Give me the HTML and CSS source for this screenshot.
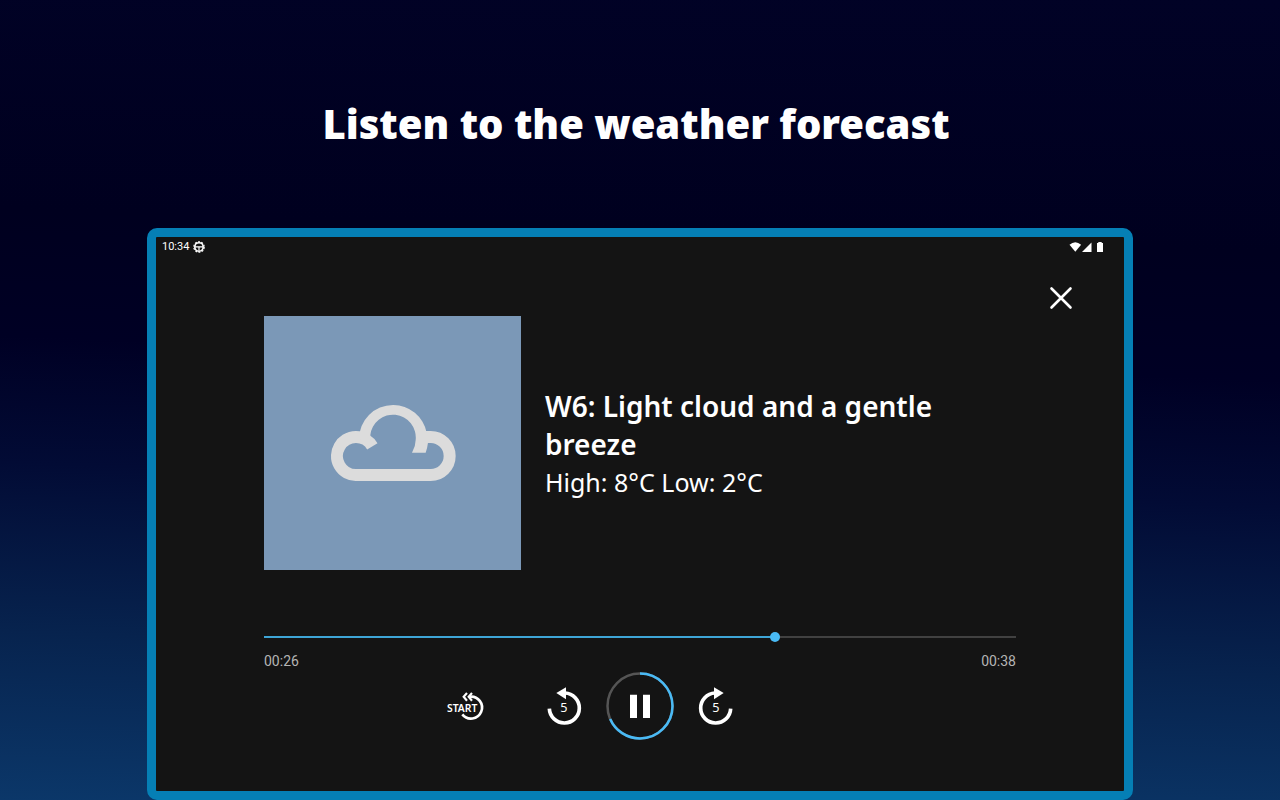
FILE: index.html
```html
<!DOCTYPE html>
<html lang="en">
  <head>
    <meta charset="utf-8">
    <meta name="viewport" content="width=device-width, initial-scale=1">
    <title>Listen to the weather forecast</title>
    <link rel="stylesheet" href="styles.css">
  </head>
  <body>
    <header class="intro">
      <h1>Listen to the weather forecast</h1>
    </header>
    <main class="device">
      <div class="status-bar">
        <div class="status-group">
          <span>10:34</span>
          <svg class="status-gear" viewBox="0 0 12 12" aria-hidden="true">
            <circle cx="6" cy="6" r="5.2" fill="none" stroke="#fff" stroke-width="1.2" stroke-dasharray="2 1.27"/>
            <circle cx="6" cy="6" r="4.2" fill="none" stroke="#fff" stroke-width="1.6"/>
            <path d="M2 5.8h8M6 5.8v4" stroke="#fff" stroke-width="1.2"/>
          </svg>
        </div>
        <svg class="status-signal" viewBox="0 0 36 12" aria-hidden="true">
          <path d="M.5 3.8Q6.3-1.3 12.1 3.8L6.3 10.7Z" fill="#fff"/>
          <path d="M13 11L22.500 1.500V11Z" fill="#fff"/>
          <path d="M28 2h1.300V1h3.400v1h1.300v9h-6Z" fill="#fff"/>
        </svg>
      </div>

      <button class="close" aria-label="Close">
        <svg viewBox="0 0 24 24"><path d="M2.500 2.500L21.500 21.500M21.500 2.500L2.500 21.500" stroke="#fff" stroke-width="2.600" stroke-linecap="round"/></svg>
      </button>

      <div class="player">
        <section class="forecast">
          <div class="artwork">
            <svg viewBox="60 44 378 229" aria-hidden="true">
              <path d="M187 168A57 57 0 1 0 137 254H362A57 57 0 0 0 362 140H345" fill="none" stroke="#dcdcdc" stroke-width="36"/>
              <path d="M147 146A102 102 0 0 1 249 44A102 102 0 0 1 350 127L354 157Q352 173 347 187H306Q317 168 317 149A68 68 0 0 0 181 134V150Z" fill="#dcdcdc"/>
            </svg>
          </div>
          <div class="details">
            <h2>W6: Light cloud and a gentle breeze</h2>
            <p>High: 8°C Low: 2°C</p>
          </div>
        </section>

        <input class="seek" type="range" min="0" max="38" step="0.1" value="25.9" aria-label="Playback position">
        <div class="times">
          <span>00:26</span>
          <span>00:38</span>
        </div>

        <div class="controls">
          <div class="controls-left">
            <button class="start" aria-label="Back to start">
              <svg viewBox="48 79 120 120">
                <path d="M119 111A33 33 0 1 1 97 164" fill="none" stroke="#fff" stroke-width="8"/>
                <path d="M111 100L101 111.500L111 123M126 100L116 111.500L126 123" fill="none" stroke="#fff" stroke-width="6.500"/>
                <text x="51" y="156">START</text>
              </svg>
            </button>
            <button class="skip" aria-label="Back 5 seconds">
              <svg viewBox="349 79 108 120">
                <path d="M359 147A45 45 0 1 0 406 100" fill="none" stroke="#fff" stroke-width="11"/>
                <path d="M380 100L409 83V119Z" fill="#fff"/>
                <text x="403" y="158">5</text>
              </svg>
            </button>
          </div>
          <button class="pause" aria-label="Pause">
            <svg viewBox="0 0 68 68">
              <circle cx="34" cy="34" r="32.500" fill="none" stroke="#555" stroke-width="2.500"/>
              <circle cx="34" cy="34" r="32.500" fill="none" stroke="#49baf5" stroke-width="2.500" pathLength="100" stroke-dasharray="68.500 100" transform="rotate(-90 34 34)"/>
              <path d="M24 22.700h7v23.300h-7zM37 22.700h7v23.300h-7z" fill="#fff"/>
            </svg>
          </button>
          <div>
            <button class="skip" aria-label="Forward 5 seconds">
              <svg viewBox="349 79 108 120">
                <path d="M447 147A45 45 0 1 1 400 100" fill="none" stroke="#fff" stroke-width="11"/>
                <path d="M426 100L397 83V119Z" fill="#fff"/>
                <text x="403" y="158">5</text>
              </svg>
            </button>
          </div>
        </div>
      </div>
    </main>
  </body>
</html>
```
FILE: styles.css
```css
* {
  box-sizing: border-box;
}

body {
  margin: 0;
  min-height: 100vh;
  display: flex;
  flex-direction: column;
  color: #fff;
  font-family: "Noto Sans", "Open Sans", sans-serif;
  background: linear-gradient(182deg, #010226 0%, #00001f 30%, #000024 45%, #020b35 60%, #07234e 80%, #0b3769 100%);
}

h1, h2, p {
  margin: 0;
}

button {
  display: block;
  padding: 0;
  border: none;
  background: none;
  color: inherit;
  cursor: pointer;
}

svg {
  display: block;
}

.intro {
  padding: 92px 8px 72px 0;
  text-align: center;
}

.intro h1 {
  font-size: 40px;
  line-height: 64px;
  font-weight: 900;
}

.device {
  flex: 1;
  display: flex;
  flex-direction: column;
  margin: 0 147px;
  border: 9px solid #057fb5;
  border-radius: 10px;
  background: #141414;
}

.status-bar {
  display: flex;
  justify-content: space-between;
  align-items: center;
  height: 19px;
  padding: 0 19px 0 6px;
  font: 11px Roboto, sans-serif;
}

.status-group {
  display: flex;
  align-items: center;
  gap: 4px;
}

.status-gear {
  width: 12px;
  height: 12px;
}

.status-signal {
  width: 36px;
  height: 12px;
}

.close {
  align-self: flex-end;
  margin: 30px 51px 6px 0;
}

.close svg {
  width: 24px;
  height: 24px;
}

.player {
  padding: 0 108px;
}

.forecast {
  display: flex;
  align-items: center;
  gap: 24px;
}

.artwork {
  display: flex;
  flex: none;
  justify-content: center;
  align-items: center;
  width: 257px;
  height: 254px;
  background: #7b98b7;
}

.artwork svg {
  width: 126px;
}

.details {
  max-width: 400px;
  padding-top: 2px;
}

.details h2 {
  font-size: 28px;
  line-height: 38px;
  font-weight: 600;
}

.details p {
  font-size: 25px;
  line-height: 38px;
}

.seek {
  display: block;
  -webkit-appearance: none;
  appearance: none;
  width: 100%;
  height: 20px;
  margin: 57px 0 4px;
  background: linear-gradient(to right, #3ea5d6 68%, #414141 68%) center / 100% 2px no-repeat;
}

.seek::-webkit-slider-thumb {
  -webkit-appearance: none;
  width: 10px;
  height: 10px;
  border-radius: 50%;
  background: #49baf5;
}

.times {
  display: flex;
  justify-content: space-between;
  color: #b4b4b4;
  font: 14px/20px Roboto, sans-serif;
}

.controls {
  display: grid;
  grid-template-columns: 1fr auto 1fr;
  align-items: center;
  gap: 24px;
  padding-top: 1px;
}

.controls-left {
  display: flex;
  justify-content: flex-end;
  gap: 60px;
}

.controls text {
  fill: #fff;
  font-family: "Noto Sans", "Open Sans", sans-serif;
}

.start svg,
.skip svg {
  height: 42px;
}

.start svg {
  width: 40px;
}

.start text {
  font-size: 31px;
  font-weight: 600;
}

.skip svg {
  width: 36px;
}

.skip text {
  font-size: 38px;
  text-anchor: middle;
}

.pause svg {
  width: 68px;
  height: 68px;
}
```
